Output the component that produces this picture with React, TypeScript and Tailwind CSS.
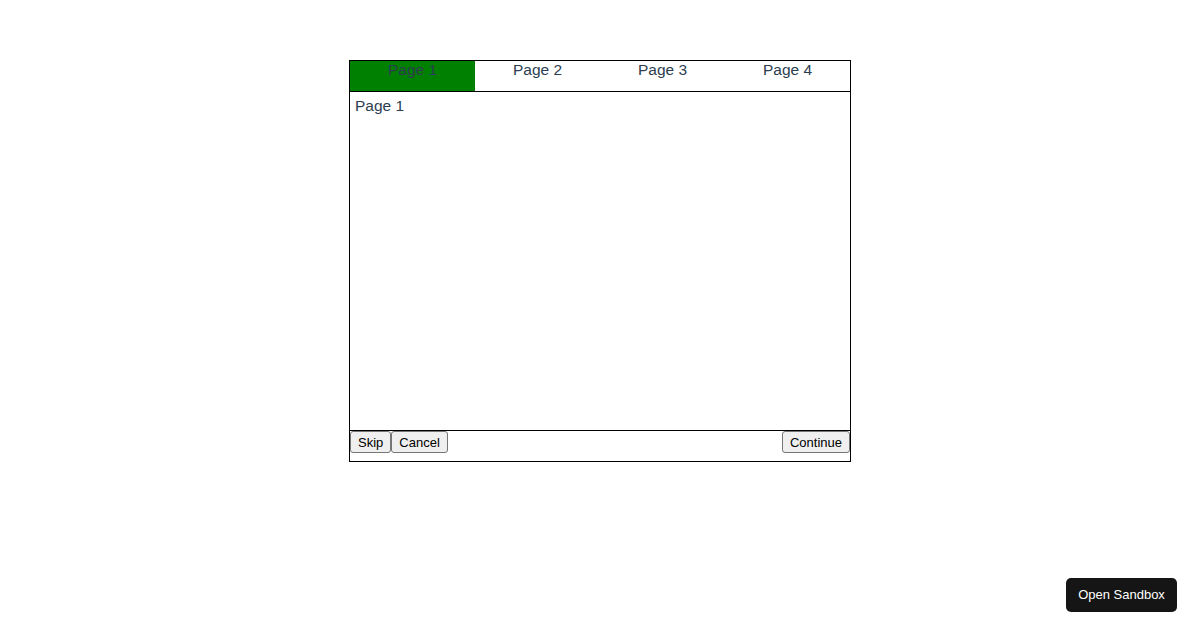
import { useState } from "react";

const pages = ["Page 1", "Page 2", "Page 3", "Page 4"];

const btn =
  "h-[22px] px-[7px] text-[13px] text-black bg-[#efefef] border border-[#767676] rounded-[3px] font-['Liberation_Sans',Arial,sans-serif]";

export default function App() {
  const [active, setActive] = useState(0);

  return (
    <div className="min-h-[630px] bg-white font-['Liberation_Sans',Arial,sans-serif] text-[#2c3e50] pt-[60px]">
      <div className="w-[502px] mx-auto border border-black leading-[normal]">
        {/* tabs */}
        <div className="flex h-[31px] border-b border-black">
          {pages.map((page, i) => (
            <div
              key={page}
              onClick={() => setActive(i)}
              className={
                i === active
                  ? "flex-1 text-center text-[15.5px] bg-[#008000] cursor-pointer"
                  : "flex-1 text-center text-[15.5px] cursor-pointer"
              }
            >
              {page}
            </div>
          ))}
        </div>

        {/* content */}
        <div className="h-[339px] border-b border-black p-[5px] text-[15.5px]">
          {pages[active]}
        </div>

        {/* footer */}
        <div className="flex justify-between items-start h-[30px]">
          <div className="flex">
            <button className={btn}>Skip</button>
            <button className={btn}>Cancel</button>
          </div>
          <button className={btn}>Continue</button>
        </div>
      </div>

      <button className="fixed right-[23px] bottom-[18px] w-[111px] h-[34px] rounded-[5px] bg-[#151515] text-[13px] text-white font-['Liberation_Sans',Arial,sans-serif]">
        Open Sandbox
      </button>
    </div>
  );
}
